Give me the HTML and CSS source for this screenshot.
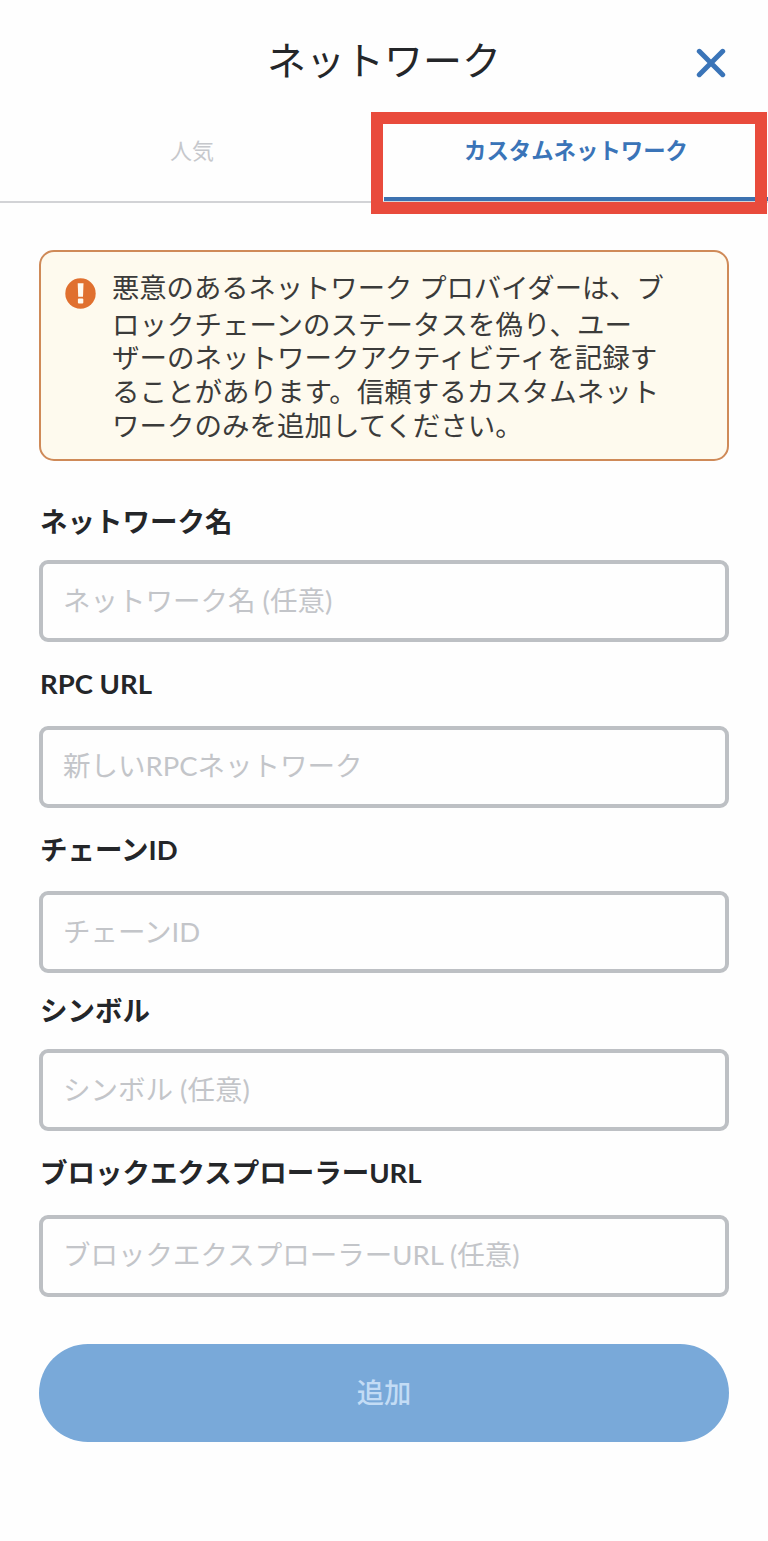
FILE: index.html
```html
<!DOCTYPE html>
<html lang="ja">
<head>
  <meta charset="UTF-8">
  <meta name="viewport" content="width=device-width, initial-scale=1.0">
  <title>ネットワーク</title>
  <link rel="stylesheet" href="styles.css">
</head>
<body>
  <header class="header">
    <h1 class="title">ネットワーク</h1>
    <button class="close" type="button" aria-label="閉じる">
      <svg width="30" height="30" viewBox="0 0 30 30">
        <path d="M3.3 3.3L26.7 26.7M26.7 3.3L3.3 26.7" stroke="#3a74b8" stroke-width="5" stroke-linecap="round" />
      </svg>
    </button>
  </header>
  <nav class="tabs">
    <a class="tab">人気</a>
    <a class="tab active">カスタムネットワーク</a>
    <div class="highlight"></div>
  </nav>
  <main class="content">
    <div class="alert">
      <svg class="alert-icon" width="31" height="31" viewBox="0 0 31 31">
        <circle cx="15.5" cy="15.5" r="15.2" fill="#e0702f" />
        <path d="M12.7 5.3h5.8l-.5 13.5h-4.8z" fill="#fffaf0" />
        <rect x="12.9" y="20.4" width="5.4" height="5" rx="1" fill="#fffaf0" />
      </svg>
      <p class="alert-text">
        <span class="first">悪意のあるネットワーク プロバイダーは、ブ</span><br>ロックチェーンのステータスを偽り、ユー<br>ザーのネットワークアクティビティを記録す<br>ることがあります。信頼するカスタムネット<br>ワークのみを追加してください。
      </p>
    </div>
    <form class="form">
      <label class="label" for="name">ネットワーク名</label>
      <input class="input" id="name" type="text" placeholder="ネットワーク名 (任意)">
      <label class="label tall" for="rpc">RPC URL</label>
      <input class="input" id="rpc" type="text" placeholder="新しいRPCネットワーク">
      <label class="label tall" for="chain">チェーンID</label>
      <input class="input" id="chain" type="text" placeholder="チェーンID">
      <label class="label" for="symbol">シンボル</label>
      <input class="input" id="symbol" type="text" placeholder="シンボル (任意)">
      <label class="label tall" for="explorer">ブロックエクスプローラーURL</label>
      <input class="input" id="explorer" type="text" placeholder="ブロックエクスプローラーURL (任意)">
      <button class="submit" type="button">追加</button>
    </form>
  </main>
</body>

</html>
```
FILE: styles.css
```css
* {
  box-sizing: border-box;
}

body {
  margin: 0;
  background: #fefefe;
  color: #242629;
  font-family: Lato, "Noto Sans CJK JP", sans-serif;
}

.header {
  height: 113px;
  padding: 0 42px;
  display: grid;
  grid-template-columns: 30px 1fr 30px;
}

.title {
  grid-column: 2;
  margin: 0;
  font-size: 39px;
  font-weight: 400;
  line-height: 121px;
  text-align: center;
  white-space: nowrap;
}

.close {
  width: 30px;
  height: 30px;
  margin-top: 48px;
  padding: 0;
  border: none;
  background: none;
  cursor: pointer;
}

.close svg {
  display: block;
}

.tabs {
  position: relative;
  height: 90px;
  display: flex;
  border-bottom: 2px solid #d2d3d6;
}

.tab {
  flex: 1;
  height: 88px;
  font-size: 22px;
  line-height: 75px;
  text-align: center;
  color: #c6c8cc;
}

.tab.active {
  color: #3a74b8;
  font-size: 22.4px;
  font-weight: 700;
  border-bottom: 4px solid #3d72b0;
}

/* 選択中のタブを囲む赤枠 */
.highlight {
  position: absolute;
  top: -1px;
  left: 371px;
  width: 396px;
  height: 102px;
  border: 12px solid #e94b3c;
}

.content {
  padding: 47px 39px 0;
}

.alert {
  height: 211px;
  padding: 16px 24px;
  display: flex;
  gap: 16px;
  border: 2px solid #cf8a58;
  border-radius: 15px;
  background: #fefaee;
}

.alert-icon {
  flex: none;
  margin-top: 10px;
}

.alert-text {
  margin: 3px 0 0;
  font-size: 27.5px;
  line-height: 33.7px;
  color: #3b3b3a;
  white-space: nowrap;
}

.alert-text .first {
  display: inline-block;
  padding-bottom: 3px;
  font-size: 27.3px;
}

.form {
  padding-top: 23px;
  display: flex;
  flex-direction: column;
}

.label {
  height: 76px;
  padding-left: 1px;
  font-size: 27.5px;
  font-weight: 700;
  line-height: 76px;
}

.label.tall {
  height: 83.5px;
  line-height: 83.5px;
}

.input {
  height: 82px;
  padding: 0 20px 2px;
  border: 4px solid #bdc0c4;
  border-radius: 9px;
  background: #fefefe;
  font-family: inherit;
  font-size: 27.5px;
  outline: none;
}

.input::placeholder {
  color: #c3c5c9;
  opacity: 1;
}

.submit {
  height: 98px;
  margin-top: 47px;
  padding-bottom: 4px;
  border: none;
  border-radius: 49px;
  background: #79a9d9;
  color: #c3dcf5;
  font-family: inherit;
  font-size: 27.3px;
  font-weight: 500;
}
```
